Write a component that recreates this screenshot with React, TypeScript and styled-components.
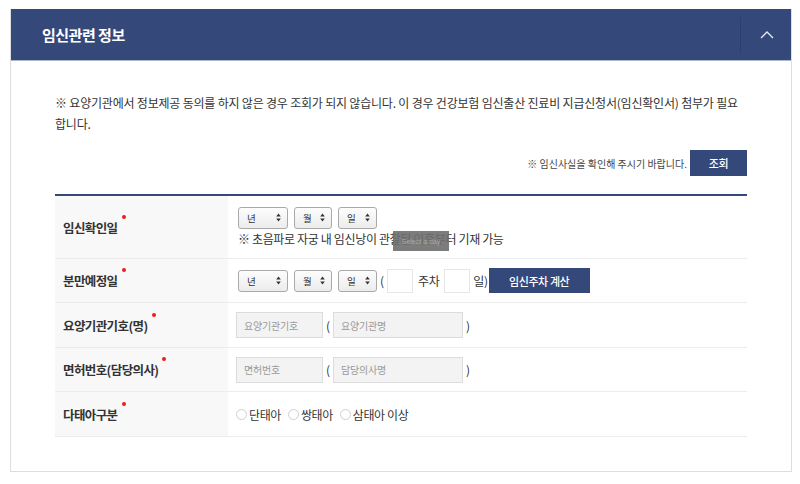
import styled, { createGlobalStyle } from 'styled-components';

const GlobalStyle = createGlobalStyle`
  * { box-sizing: border-box; }
  body {
    margin: 0;
    background: #ffffff;
    font-family: "Noto Sans CJK KR", "Noto Sans", sans-serif;
    color: #333;
  }
`;

const navy = '#34497a';

const Page = styled.div`
  width: 800px;
  height: 484px;
  padding: 9px 8px 0 10px;
`;

const Panel = styled.section`
  width: 782px;
  height: 463px;
  border: 1px solid #dedede;
  border-top: none;
  display: flex;
  flex-direction: column;
`;

const PanelHeader = styled.header`
  height: 52px;
  background: ${navy};
  border-bottom: 1px solid #a9b5cc;
  display: flex;
  align-items: center;
  padding-left: 31px;
`;

const PanelTitle = styled.h2`
  flex: 1;
  margin: 0;
  font-size: 15px;
  font-weight: 700;
  letter-spacing: -0.5px;
  color: #ffffff;
`;

const ToggleArea = styled.div`
  width: 51px;
  height: 35px;
  border-left: 1px solid #2c3f6b;
  display: flex;
  align-items: center;
  justify-content: center;
  padding-left: 2px;
`;

const PanelBody = styled.div`
  flex: 1;
  padding: 31px 44px 0 44px;
`;

const Notice = styled.p`
  margin: 0;
  font-size: 12px;
  line-height: 21px;
  letter-spacing: -0.2px;
  color: #333;
`;

const CheckBar = styled.div`
  margin-top: 16px;
  display: flex;
  justify-content: flex-end;
  align-items: center;
  gap: 3px;
`;

const CheckHint = styled.span`
  font-size: 10px;
  letter-spacing: 0;
  color: #444;
`;

const NavyButton = styled.button<{ $w: number; $h: number }>`
  width: ${(p) => p.$w}px;
  height: ${(p) => p.$h}px;
  border: none;
  background: ${navy};
  color: #fff;
  font-family: inherit;
  font-size: 11px;
  font-weight: 500;
  letter-spacing: -0.4px;
  padding: 0;
  cursor: pointer;
`;

const FormTable = styled.div`
  margin-top: 18px;
  border-top: 2px solid ${navy};
`;

const Row = styled.div<{ $h: number }>`
  display: grid;
  grid-template-columns: 173px 1fr;
  height: ${(p) => p.$h}px;
  border-bottom: 1px solid #ececec;
`;

const Label = styled.div`
  background: #f8f8f8;
  display: flex;
  align-items: center;
  padding-left: 8px;
  font-size: 12.5px;
  font-weight: 700;
  letter-spacing: -0.6px;
  color: #333;
`;

const LabelText = styled.span`
  position: relative;
`;

const Required = styled.span`
  position: absolute;
  right: -8px;
  top: -3px;
  width: 4px;
  height: 4px;
  border-radius: 50%;
  background: #ee1c1c;
`;

const Cell = styled.div<{ $column?: boolean }>`
  position: relative;
  display: flex;
  flex-direction: ${(p) => (p.$column ? 'column' : 'row')};
  justify-content: ${(p) => (p.$column ? 'center' : 'flex-start')};
  align-items: ${(p) => (p.$column ? 'flex-start' : 'center')};
  padding-left: 8px;
  gap: ${(p) => (p.$column ? '1px' : '0')};
`;

const Line = styled.div`
  display: flex;
  align-items: center;
`;

const SelectBox = styled.div<{ $w: number }>`
  width: ${(p) => p.$w}px;
  height: 22px;
  margin-left: ${(p) => (p.$w === 50 ? '2px' : '6px')};
  border: 1px solid #a9a9a9;
  border-radius: 3px;
  background: linear-gradient(#fdfdfd, #ececec);
  display: flex;
  align-items: center;
  justify-content: space-between;
  padding: 0 6px 0 8px;
  font-size: 9.5px;
  color: #333;
`;

const Hint = styled.div`
  font-size: 12px;
  letter-spacing: -0.35px;
  color: #333;
  margin-left: 2px;
  line-height: 18px;
`;

const Paren = styled.span`
  font-size: 12px;
  color: #333;
  margin: 0 3px;
`;

const SmallInput = styled.input`
  width: 26px;
  height: 24px;
  border: 1px solid #e6e6e6;
  background: #fff;
  padding: 0;
`;

const UnitText = styled.span<{ $tight?: boolean }>`
  font-size: 12px;
  letter-spacing: -0.4px;
  color: #333;
  margin: ${(p) => (p.$tight ? '0 1px 0 3px' : '0 5px')};
`;

const TextInput = styled.input<{ $w: number }>`
  width: ${(p) => p.$w}px;
  height: 26px;
  border: 1px solid #dcdcdc;
  background: #f3f3f3;
  padding: 0 7px;
  font-family: inherit;
  font-size: 10px;
  letter-spacing: -0.2px;
  color: #333;
  &::placeholder { color: #9a9a9a; }
`;

const RadioGroup = styled.div`
  display: flex;
  align-items: center;
  gap: 7px;
`;

const RadioItem = styled.label`
  display: flex;
  align-items: center;
  gap: 2px;
  font-size: 12px;
  letter-spacing: -0.4px;
  color: #333;
`;

const RadioDot = styled.span`
  width: 11px;
  height: 11px;
  border-radius: 50%;
  border: 1px solid #cfcfcf;
  background: #fff;
`;

const DayTooltip = styled.div`
  position: absolute;
  left: 165px;
  top: 35px;
  width: 56px;
  height: 20px;
  background: rgba(110, 110, 110, 0.9);
  color: #a8a8a8;
  font-family: "Liberation Sans", sans-serif;
  font-size: 7px;
  display: flex;
  align-items: center;
  justify-content: center;
`;

const SortArrows = () => (
  <svg width="5" height="9" viewBox="0 0 5 9">
    <path d="M2.5 0.5 L4.8 3.6 H0.2 Z M2.5 8.5 L0.2 5.4 H4.8 Z" fill="#333" />
  </svg>
);

const Select = ({ label, w }: { label: string; w: number }) => (
  <SelectBox $w={w}>
    <span>{label}</span>
    <SortArrows />
  </SelectBox>
);

const DateSelects = () => (
  <Line>
    <Select label="년" w={50} />
    <Select label="월" w={38} />
    <Select label="일" w={39} />
  </Line>
);

const FieldLabel = ({ text }: { text: string }) => (
  <Label>
    <LabelText>
      {text}
      <Required />
    </LabelText>
  </Label>
);

const App = () => {
  return (
    <Page>
      <GlobalStyle />
      <Panel>
        <PanelHeader>
          <PanelTitle>임신관련 정보</PanelTitle>
          <ToggleArea>
            <svg width="14" height="8" viewBox="0 0 14 8">
              <path d="M1 7 L7 1 L13 7" fill="none" stroke="#e8ecf4" strokeWidth="1.3" />
            </svg>
          </ToggleArea>
        </PanelHeader>
        <PanelBody>
          <Notice>
            ※ 요양기관에서 정보제공 동의를 하지 않은 경우 조회가 되지 않습니다. 이 경우 건강보험 임신출산 진료비 지급신청서(임신확인서) 첨부가 필요합니다.
          </Notice>
          <CheckBar>
            <CheckHint>※ 임신사실을 확인해 주시기 바랍니다.</CheckHint>
            <NavyButton $w={57} $h={26}>조회</NavyButton>
          </CheckBar>
          <FormTable>
            <Row $h={63}>
              <FieldLabel text="임신확인일" />
              <Cell $column>
                <DateSelects />
                <Hint>※ 초음파로 자궁 내 임신낭이 관찰된 이후부터 기재 가능</Hint>
                <DayTooltip>Select a day</DayTooltip>
              </Cell>
            </Row>
            <Row $h={44}>
              <FieldLabel text="분만예정일" />
              <Cell>
                <DateSelects />
                <Paren>(</Paren>
                <SmallInput />
                <UnitText>주차</UnitText>
                <SmallInput />
                <UnitText $tight>일)</UnitText>
                <NavyButton $w={101} $h={25}>임신주차 계산</NavyButton>
              </Cell>
            </Row>
            <Row $h={45}>
              <FieldLabel text="요양기관기호(명)" />
              <Cell>
                <TextInput $w={87} placeholder="요양기관기호" />
                <Paren>(</Paren>
                <TextInput $w={130} placeholder="요양기관명" />
                <Paren>)</Paren>
              </Cell>
            </Row>
            <Row $h={44}>
              <FieldLabel text="면허번호(담당의사)" />
              <Cell>
                <TextInput $w={87} placeholder="면허번호" />
                <Paren>(</Paren>
                <TextInput $w={130} placeholder="담당의사명" />
                <Paren>)</Paren>
              </Cell>
            </Row>
            <Row $h={45}>
              <FieldLabel text="다태아구분" />
              <Cell>
                <RadioGroup>
                  <RadioItem><RadioDot />단태아</RadioItem>
                  <RadioItem><RadioDot />쌍태아</RadioItem>
                  <RadioItem><RadioDot />삼태아 이상</RadioItem>
                </RadioGroup>
              </Cell>
            </Row>
          </FormTable>
        </PanelBody>
      </Panel>
    </Page>
  );
};

export default App;
